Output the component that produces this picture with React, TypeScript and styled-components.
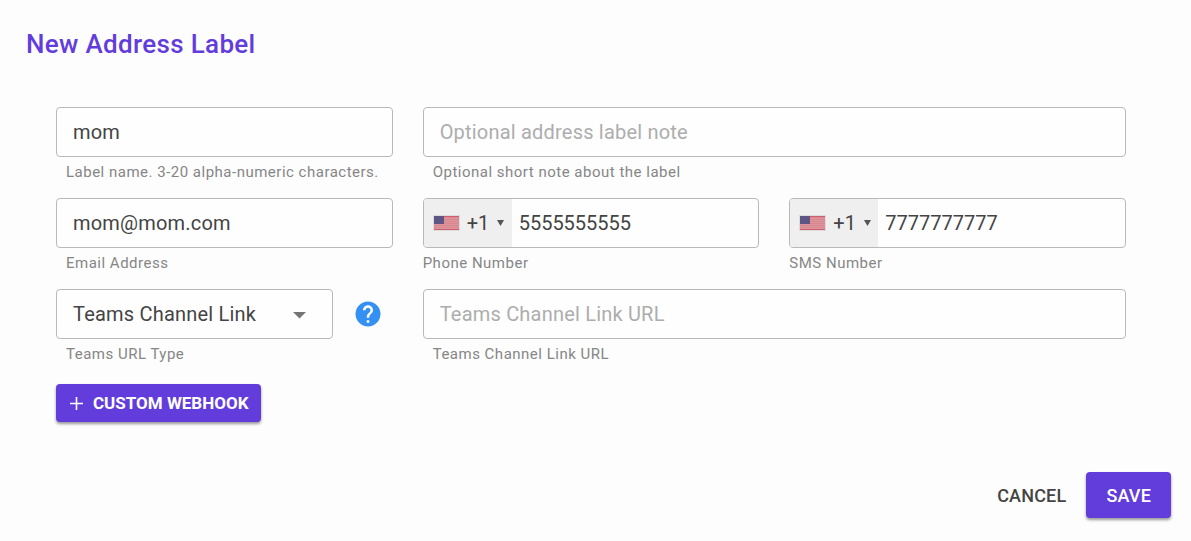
import React, { useState } from "react";
import styled, { createGlobalStyle } from "styled-components";

const GlobalStyle = createGlobalStyle`
  *, *::before, *::after { box-sizing: border-box; }
  body {
    margin: 0;
    background: #fdfdfd;
    color: #444;
    font-family: Roboto, "Liberation Sans", sans-serif;
  }
  button, input, select { font-family: inherit; }
`;

const Form = styled.form`
  padding: 28px 20px 22px 26px;
`;

const Title = styled.h1`
  margin: 0;
  color: #623ddc;
  font-size: 26px;
  font-weight: 500;
  line-height: 32px;
  letter-spacing: 0.0125em;
`;

const Fields = styled.div`
  display: grid;
  grid-template-columns: repeat(3, minmax(0, 1fr));
  column-gap: 30px;
  row-gap: 16px;
  margin: 47px 45px 0 30px;
`;

const Field = styled.div<{ $span?: number }>`
  grid-column: span ${(p) => p.$span ?? 1};
`;

const Control = styled.div`
  display: flex;
  width: 100%;
  height: 50px;
  border: 1px solid #b9b9b9;
  border-radius: 4px;
  background: #fefefe;
  overflow: hidden;
  position: relative;
`;

const Input = styled.input<{ $tight?: boolean }>`
  flex: 1;
  min-width: 0;
  padding: 0 ${(p) => (p.$tight ? 7 : 16)}px;
  border: 0;
  outline: 0;
  background: transparent;
  color: #444;
  font-size: 20px;
  letter-spacing: ${(p) => (p.$tight ? "normal" : "0.01em")};
  &::placeholder { color: #adadad; opacity: 1; }
`;

const Select = styled.select`
  flex: 1;
  padding: 0 16px;
  border: 0;
  outline: 0;
  appearance: none;
  background: transparent;
  color: #444;
  font-size: 20px;
  letter-spacing: 0.01em;
`;

const SelectArrow = styled.svg`
  position: absolute;
  right: 26px;
  top: 22px;
  pointer-events: none;
`;

const SelectRow = styled.div`
  display: flex;
  align-items: center;
  gap: 20px;
  padding-right: 10px;
`;

const HelpButton = styled.button`
  display: flex;
  flex: none;
  padding: 0;
  border: 0;
  background: none;
  cursor: pointer;
`;

const Helper = styled.label<{ $flush?: boolean }>`
  display: block;
  margin-top: 5px;
  padding-left: ${(p) => (p.$flush ? 0 : 10)}px;
  color: #868686;
  font-size: 15px;
  line-height: 20px;
  letter-spacing: 0.0333em;
`;

const CountryButton = styled.button`
  display: flex;
  align-items: center;
  width: 88px;
  padding: 0 0 0 9px;
  border: 0;
  background: #efefef;
  color: #444;
  font-size: 20px;
  cursor: pointer;
`;

const DialCode = styled.span`
  margin: 0 8px 0 7px;
`;

const PrimaryButton = styled.button<{ $large?: boolean }>`
  display: inline-flex;
  align-items: center;
  gap: 9px;
  height: ${(p) => (p.$large ? 46 : 38)}px;
  padding: 0 ${(p) => (p.$large ? 20 : 13)}px;
  border: 0;
  border-radius: 4px;
  background: #623ddc;
  box-shadow: 0 2px 3px rgba(0, 0, 0, 0.4);
  color: #fff;
  font-size: ${(p) => (p.$large ? 18 : 17)}px;
  font-weight: ${(p) => (p.$large ? 500 : 700)};
  letter-spacing: ${(p) => (p.$large ? "0.01em" : "normal")};
  cursor: pointer;
`;

const TextButton = styled.button`
  padding: 0;
  border: 0;
  background: none;
  color: #444;
  font-size: 18px;
  font-weight: 500;
  letter-spacing: 0.01em;
  cursor: pointer;
`;

const WebhookRow = styled.div`
  margin: 20px 0 0 30px;
`;

const Actions = styled.div`
  display: flex;
  justify-content: flex-end;
  gap: 20px;
  margin-top: 50px;
`;

const UsFlag = () => (
  <svg width="27" height="16" viewBox="0 0 27 16" aria-hidden="true">
    <rect width="27" height="16" fill="#dcdcdc" />
    <rect x="1" y="1" width="25" height="14" fill="#d9868f" />
    {[3, 5, 7, 9, 11, 13].map((y) => (
      <rect key={y} x="1" y={y} width="25" height="1" fill="#dc959d" />
    ))}
    <path d="M1 1.5H26M1 14.5H26" stroke="#cf5f6c" />
    <rect x="1" y="1" width="10" height="8" fill="#5d5685" />
  </svg>
);

type PhoneFieldProps = { id: string; label: string; initial: string };

const PhoneField = ({ id, label, initial }: PhoneFieldProps) => {
  const [value, setValue] = useState(initial);
  return (
    <Field>
      <Control>
        <CountryButton type="button" aria-label={`${label} country code`}>
          <UsFlag />
          <DialCode>+1</DialCode>
          <svg width="7" height="6" viewBox="0 0 7 6" aria-hidden="true">
            <path d="M0 0H7L3.5 6Z" fill="#555" />
          </svg>
        </CountryButton>
        <Input id={id} type="tel" $tight value={value} onChange={(e) => setValue(e.target.value)} />
      </Control>
      <Helper htmlFor={id} $flush>{label}</Helper>
    </Field>
  );
};

type TextFieldProps = {
  id: string;
  label: string;
  initial?: string;
  placeholder?: string;
  type?: string;
  span?: number;
};

const TextField = ({ id, label, initial = "", placeholder, type = "text", span }: TextFieldProps) => {
  const [value, setValue] = useState(initial);
  return (
    <Field $span={span}>
      <Control>
        <Input id={id} type={type} placeholder={placeholder} value={value} onChange={(e) => setValue(e.target.value)} />
      </Control>
      <Helper htmlFor={id}>{label}</Helper>
    </Field>
  );
};

export default function App() {
  return (
    <>
      <GlobalStyle />
      <Form onSubmit={(e) => e.preventDefault()}>
        <Title>New Address Label</Title>
        <Fields>
          <TextField id="name" label="Label name. 3-20 alpha-numeric characters." initial="mom" />
          <TextField id="note" label="Optional short note about the label" placeholder="Optional address label note" span={2} />
          <TextField id="email" type="email" label="Email Address" initial="mom@mom.com" />
          <PhoneField id="phone" label="Phone Number" initial="5555555555" />
          <PhoneField id="sms" label="SMS Number" initial="7777777777" />
          <Field>
            <SelectRow>
              <Control>
                <Select id="url-type" defaultValue="channel">
                  <option value="channel">Teams Channel Link</option>
                </Select>
                <SelectArrow width="13" height="7" viewBox="0 0 13 7" aria-hidden="true">
                  <path d="M0 0H13L6.5 6.5Z" fill="#757575" />
                </SelectArrow>
              </Control>
              <HelpButton type="button" aria-label="Help">
                <svg width="30" height="30" viewBox="0 0 24 24" aria-hidden="true">
                  <path
                    fill="#3490f3"
                    d="M12 2C6.48 2 2 6.48 2 12s4.48 10 10 10 10-4.48 10-10S17.52 2 12 2z"
                  />
                  <path
                    fill="#fff"
                    d="M13 19h-2v-2h2v2zm2.07-7.75l-.9.92C13.45 12.9 13 13.5 13 15h-2v-.5c0-1.1.45-2.1 1.17-2.83l1.24-1.26c.37-.36.59-.86.59-1.41 0-1.1-.9-2-2-2s-2 .9-2 2H8c0-2.21 1.79-4 4-4s4 1.79 4 4c0 .88-.36 1.68-.93 2.25z"
                  />
                </svg>
              </HelpButton>
            </SelectRow>
            <Helper htmlFor="url-type">Teams URL Type</Helper>
          </Field>
          <TextField id="url" label="Teams Channel Link URL" placeholder="Teams Channel Link URL" span={2} />
        </Fields>
        <WebhookRow>
          <PrimaryButton type="button">
            <svg width="15" height="15" viewBox="0 0 15 15" aria-hidden="true">
              <path d="M7.5 1V14M1 7.5H14" stroke="#fff" strokeWidth="1.6" />
            </svg>
            CUSTOM WEBHOOK
          </PrimaryButton>
        </WebhookRow>
        <Actions>
          <TextButton type="button">CANCEL</TextButton>
          <PrimaryButton type="submit" $large>SAVE</PrimaryButton>
        </Actions>
      </Form>
    </>
  );
}
